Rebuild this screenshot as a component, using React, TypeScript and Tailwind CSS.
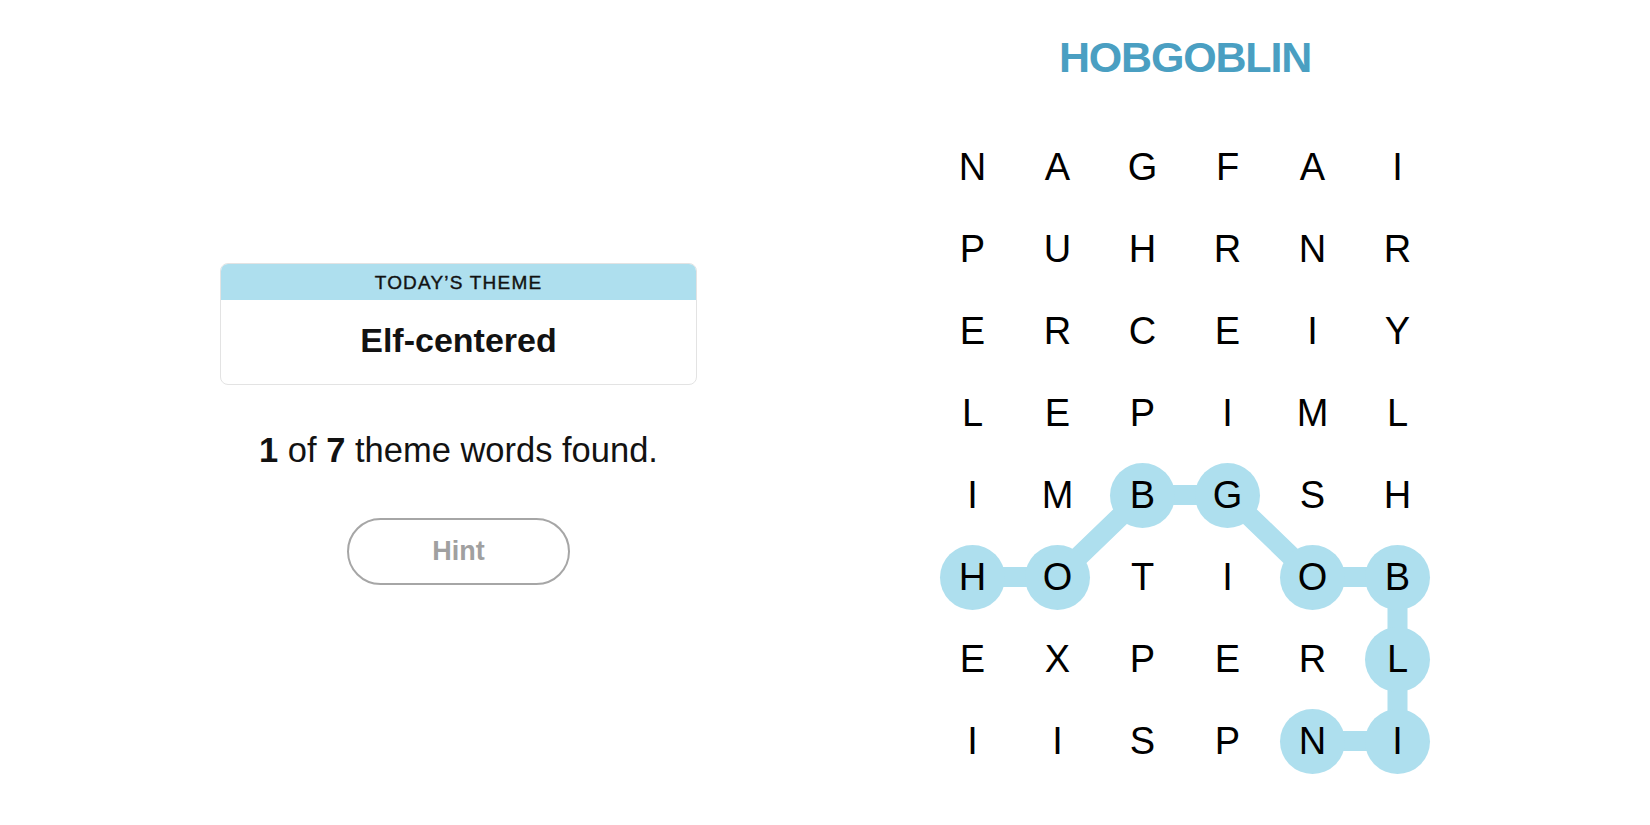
import React from "react";

const GRID = [
    "NAGFAI",
    "PUHRNR",
    "ERCEIY",
    "LEPIML",
    "IMBGSH",
    "HOTIOB",
    "EXPERL",
    "IISPNI",
];

// path of the found word, as [row, col]
const FOUND: [number, number][] = [
    [5, 0],
    [5, 1],
    [4, 2],
    [4, 3],
    [5, 4],
    [5, 5],
    [6, 5],
    [7, 5],
    [7, 4],
];

const CELL_W = 85;
const CELL_H = 82;

const isFound = (r: number, c: number) => FOUND.some(([fr, fc]) => fr === r && fc === c);

const Board = () => {
    const pts = FOUND.map(([r, c]) => `${c * CELL_W + CELL_W / 2},${r * CELL_H + CELL_H / 2}`).join(" ");

    return (
        <div className="relative w-[510px] h-[656px]">
            <svg className="absolute inset-0" width={510} height={656}>
                <polyline points={pts} fill="none" stroke="#aedfee" strokeWidth={20} strokeLinejoin="round" />
            </svg>
            <div className="relative grid grid-cols-[repeat(6,85px)] grid-rows-[repeat(8,82px)]">
                {GRID.map((row, r) =>
                    row.split("").map((ch, c) => (
                        <div key={`${r}-${c}`} className="flex items-center justify-center">
                            <div
                                className={
                                    "w-[65px] h-[65px] rounded-full flex items-center justify-center text-[38px] leading-none text-black " +
                                    (isFound(r, c) ? "bg-[#aedfee]" : "")
                                }
                            >
                                {ch}
                            </div>
                        </div>
                    ))
                )}
            </div>
        </div>
    );
};

export default function App() {
    return (
        <div className="w-[1650px] h-[825px] bg-white flex font-['Liberation_Sans',Arial,sans-serif] text-black">
            <div className="w-[917px] flex flex-col items-center pt-[263px]">
                <div className="w-[477px] rounded-lg border border-[#e3e3e3] overflow-hidden">
                    <div className="h-[36px] bg-[#aedfee] flex items-center justify-center text-[19px] tracking-[1.2px] text-[#121212] pt-[2px] [-webkit-text-stroke:0.4px_#121212]">
                        TODAY’S THEME
                    </div>
                    <div className="h-[84px] flex items-center justify-center text-[34px] font-bold text-[#121212] pb-[3px]">
                        Elf-centered
                    </div>
                </div>
                <p className="mt-[48px] text-[34.5px] leading-none text-[#121212]">
                    <span className="font-bold">1</span> of <span className="font-bold">7</span> theme words found.
                </p>
                <button className="mt-[50px] w-[223px] h-[67px] rounded-full border-2 border-[#a6a6a6] text-[27px] font-bold text-[#a0a0a0]">
                    Hint
                </button>
            </div>
            <div className="w-[536px] flex flex-col items-center">
                <h1 className="mt-[35px] text-[43px] leading-[44px] font-bold text-[#4a9fc2] tracking-[-1.2px]">HOBGOBLIN</h1>
                <div className="mt-[47px]">
                    <Board />
                </div>
            </div>
        </div>
    );
}
